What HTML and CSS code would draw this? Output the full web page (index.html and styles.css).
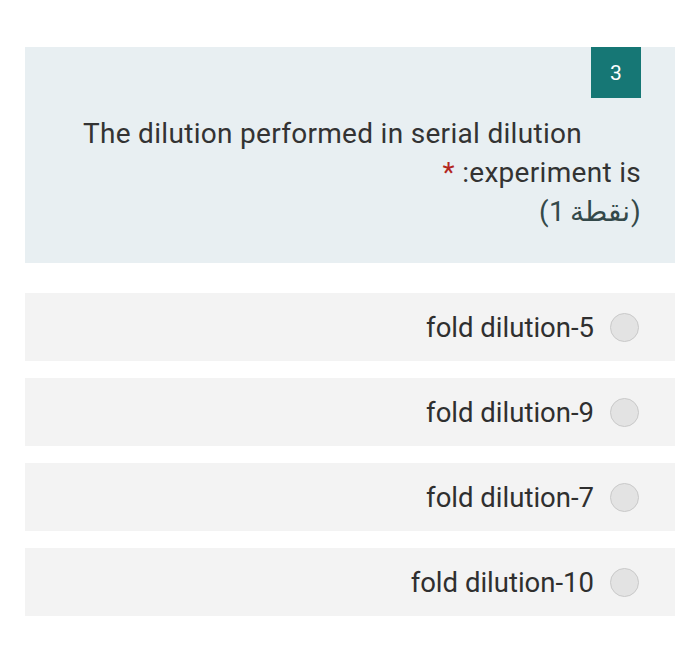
FILE: index.html
```html
<!DOCTYPE html>
<html>
<head>
<meta charset="utf-8">
<link rel="stylesheet" href="styles.css">
</head>
<body>
<div class="page">
  <section class="question">
    <div class="badge-row"><span class="badge">3</span></div>
    <div class="title">
      <div class="line line-first">The dilution performed in serial dilution</div>
      <div class="line line-end"><span class="req">*</span> :experiment is</div>
      <div class="line points"><span>(1</span><span class="ar" dir="rtl">نقطة</span><span>)</span></div>
    </div>
  </section>
  <div class="options">
    <label class="option"><span class="opt-text">fold dilution-5</span><span class="radio"></span></label>
    <label class="option"><span class="opt-text">fold dilution-9</span><span class="radio"></span></label>
    <label class="option"><span class="opt-text">fold dilution-7</span><span class="radio"></span></label>
    <label class="option"><span class="opt-text">fold dilution-10</span><span class="radio"></span></label>
  </div>
</div>
</body>
</html>
```

FILE: styles.css
```css
html, body {
  margin: 0;
  padding: 0;
  background: #ffffff;
}
body {
  font-family: Roboto, "Noto Sans", "DejaVu Sans", sans-serif;
  color: #333333;
}
.page {
  padding: 47px 25px 0 25px;
}
.question {
  background: #e8eff2;
  height: 216px;
  padding: 0 34px 0 58px;
  box-sizing: border-box;
}
.badge-row {
  display: flex;
  justify-content: flex-end;
}
.badge {
  width: 50px;
  height: 51px;
  background: #167775;
  color: #ffffff;
  font-size: 21px;
  display: flex;
  align-items: center;
  justify-content: center;
}
.title {
  font-size: 28px;
  letter-spacing: 0.3px;
  line-height: 39px;
  margin-top: 16px;
  white-space: nowrap;
}
.line-end {
  text-align: right;
}
.req {
  color: #b3261e;
}
.points {
  color: #34494a;
  display: flex;
  justify-content: flex-end;
}
.ar {
  margin-left: 5px;
  margin-right: 1px;
}
.options {
  margin-top: 30px;
  display: flex;
  flex-direction: column;
  gap: 17px;
}
.option {
  height: 68px;
  background: #f3f3f3;
  display: flex;
  align-items: center;
  justify-content: flex-end;
  padding-right: 36px;
  gap: 16px;
  font-size: 27.5px;
  color: #2f2f2f;
}
.radio {
  width: 27px;
  height: 27px;
  border-radius: 50%;
  background: #e3e3e3;
  border: 1px solid #c9c9c9;
  box-sizing: content-box;
}
```
